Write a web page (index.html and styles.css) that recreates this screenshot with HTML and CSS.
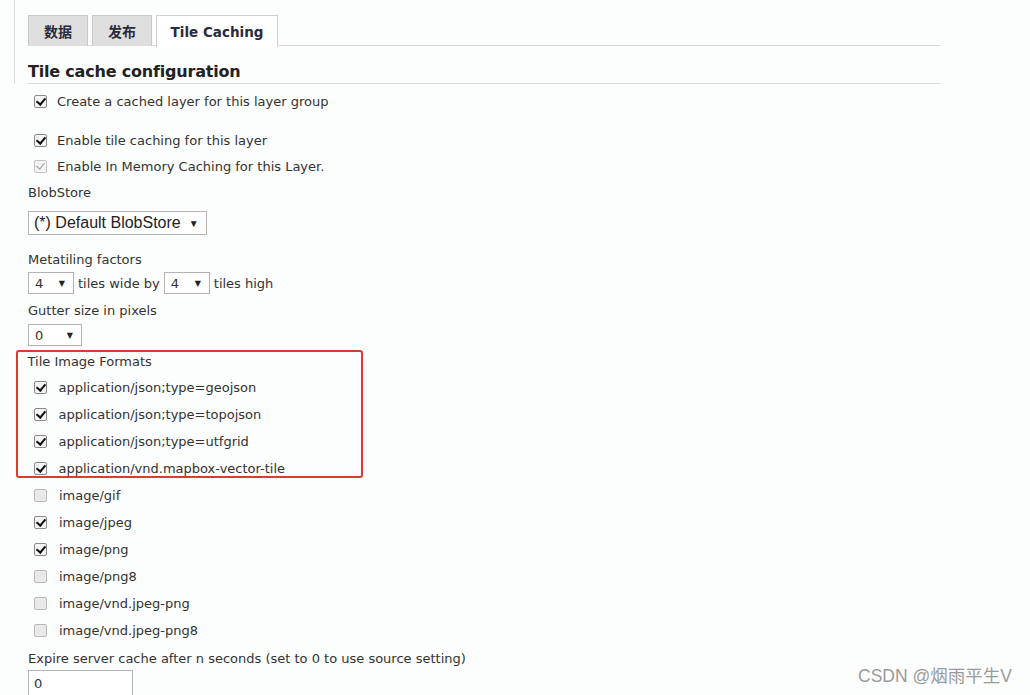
FILE: index.html
```html
<!DOCTYPE html>
<html lang="en">
<head>
  <meta charset="UTF-8">
  <title>Tile Caching</title>
  <link rel="stylesheet" href="styles.css">
</head>
<body>
  <div class="page">
    <div class="panel-head">
      <div class="tabs">
        <div class="tab">数据</div>
        <div class="tab">发布</div>
        <div class="tab active">Tile Caching</div>
      </div>
      <h2 class="section-title">Tile cache configuration</h2>
    </div>

    <div class="form">
      <div class="check-row first"><span class="cb on"></span>Create a cached layer for this layer group</div>
      <div class="check-row spaced"><span class="cb on"></span>Enable tile caching for this layer</div>
      <div class="check-row"><span class="cb on disabled"></span>Enable In Memory Caching for this Layer.</div>

      <div class="label">BlobStore</div>
      <div class="select big">(*) Default BlobStore <span class="arrow">&#9660;</span></div>

      <div class="label gap-lg">Metatiling factors</div>
      <div class="inline-row">
        <div class="select small">4 <span class="arrow">&#9660;</span></div>
        <span>tiles wide by</span>
        <div class="select small">4 <span class="arrow">&#9660;</span></div>
        <span>tiles high</span>
      </div>

      <div class="label">Gutter size in pixels</div>
      <div class="select gutter">0 <span class="arrow">&#9660;</span></div>

      <div class="highlight">
        <div class="label tight">Tile Image Formats</div>
        <div class="format lead"><span class="cb on"></span>application/json;type=geojson</div>
        <div class="format"><span class="cb on"></span>application/json;type=topojson</div>
        <div class="format"><span class="cb on"></span>application/json;type=utfgrid</div>
        <div class="format"><span class="cb on"></span>application/vnd.mapbox-vector-tile</div>
      </div>

      <div class="format after"><span class="cb"></span>image/gif</div>
      <div class="format"><span class="cb on"></span>image/jpeg</div>
      <div class="format"><span class="cb on"></span>image/png</div>
      <div class="format"><span class="cb"></span>image/png8</div>
      <div class="format"><span class="cb"></span>image/vnd.jpeg-png</div>
      <div class="format"><span class="cb"></span>image/vnd.jpeg-png8</div>

      <div class="label expire">Expire server cache after n seconds (set to 0 to use source setting)</div>
      <div class="text-input">0</div>
    </div>
  </div>

  <div class="watermark">CSDN @烟雨平生V</div>
</body>
</html>
```

FILE: styles.css
```css
* {
  margin: 0;
  padding: 0;
  box-sizing: border-box;
}

body {
  background-color: #fcfdfd;
  font-family: 'DejaVu Sans', Verdana, sans-serif;
  font-size: 13px;
  color: #333;
  width: 1030px;
  height: 695px;
  overflow: hidden;
  position: relative;
}

.page {
  padding-left: 14px;
}

.panel-head {
  border-left: 1px solid #dcdcdc;
  padding-left: 13px;
  padding-top: 15px;
  width: 926px;
}

.tabs {
  display: flex;
  gap: 4px;
  height: 31px;
  border-bottom: 1px solid #d6d6d6;
}

.tab {
  width: 60px;
  height: 31px;
  background-color: #dedede;
  border: 1px solid #c9c9c9;
  border-bottom: none;
  font-family: 'Noto Sans CJK SC', sans-serif;
  font-weight: 700;
  font-size: 14px;
  color: #2a2a3a;
  display: flex;
  align-items: center;
  justify-content: center;
}

.tab.active {
  width: 122px;
  background-color: #fff;
  border-color: #d0d0d0;
  font-family: 'DejaVu Sans', sans-serif;
  font-size: 13.5px;
  height: 32px;
}

.section-title {
  margin-top: 15px;
  font-size: 16px;
  font-weight: 700;
  color: #222;
  line-height: 22px;
  border-bottom: 1px solid #dcdcd6;
  letter-spacing: -0.2px;
}

.form {
  padding-left: 14px;
}

.check-row {
  display: flex;
  align-items: center;
  height: 20px;
  margin-top: 6px;
  padding-left: 6px;
}

.check-row.first {
  margin-top: 7px;
}

.check-row.spaced {
  margin-top: 19px;
}

.check-row .cb {
  margin-right: 10px;
}

.cb {
  width: 13px;
  height: 13px;
  border: 1px solid #b9b9b9;
  border-radius: 2px;
  background-color: #e9e9e9;
  flex-shrink: 0;
  position: relative;
}

.cb.on {
  background-color: #f4f4f4;
  border-color: #8a8a8a;
}

.cb.on::after {
  content: '';
  position: absolute;
  left: 3px;
  top: 0px;
  width: 4px;
  height: 7px;
  border-right: 2px solid #111;
  border-bottom: 2px solid #111;
  transform: rotate(40deg);
}

.cb.disabled {
  border-color: #c4c4c4;
  background-color: #f4f4f4;
}

.cb.disabled::after {
  border-color: #9a9a9a;
  border-width: 1px;
}

.label {
  height: 20px;
  line-height: 20px;
  margin-top: 7px;
  white-space: nowrap;
}

.label.gap-lg {
  margin-top: 15px;
}

.select {
  display: flex;
  align-items: center;
  background-color: #fff;
  border: 1px solid #b4b4b4;
  padding-left: 6px;
  white-space: nowrap;
}

.select .arrow {
  font-size: 8px;
  margin-left: auto;
  margin-right: 8px;
  color: #222;
}

.select.big {
  margin-top: 8px;
  width: 179px;
  height: 24px;
  font-family: 'Liberation Sans', Arial, sans-serif;
  font-size: 16px;
  color: #222;
  padding-left: 5px;
}

.select.big .arrow {
  font-size: 10px;
  margin-left: 8px;
}

.inline-row {
  display: flex;
  align-items: center;
  gap: 4px;
  margin-top: 2px;
  height: 22px;
}

.select.small {
  width: 46px;
  height: 22px;
}

.select.gutter {
  margin-top: 3px;
  width: 54px;
  height: 22px;
}

.highlight {
  margin-top: 4px;
  margin-left: -12px;
  width: 347px;
  height: 128px;
  border: 2.5px solid #de3a2e;
  border-radius: 3px;
  padding-left: 9.5px;
}

.label.tight {
  margin-top: 0;
}

.format {
  display: flex;
  align-items: center;
  height: 20px;
  margin-top: 7px;
  padding-left: 6px;
}

.format.lead {
  margin-top: 5px;
}

.format .cb {
  margin-right: 12px;
}

.format.after {
  margin-top: 7px;
}

.label.expire {
  margin-top: 9px;
}

.text-input {
  margin-top: 1px;
  width: 105px;
  height: 28px;
  border: 1px solid #b4b4b4;
  background-color: #fff;
  padding-left: 5px;
  line-height: 26px;
}

.watermark {
  position: absolute;
  left: 858px;
  top: 662px;
  font-family: 'Liberation Sans', 'Noto Sans CJK SC', sans-serif;
  font-size: 17.5px;
  color: #9a9a9a;
  text-shadow: 0 0 1px #fff;
}
```
